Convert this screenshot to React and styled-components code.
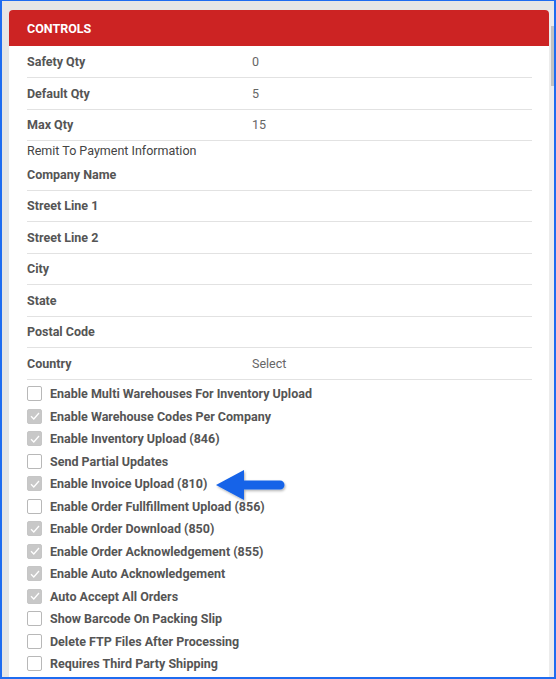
import styled, { createGlobalStyle } from "styled-components";

const GlobalStyle = createGlobalStyle`
  html, body {
    margin: 0;
    padding: 0;
    background: #e6e6e6;
  }
  body {
    font-family: Roboto, "Liberation Sans", Arial, sans-serif;
  }
`;

const Frame = styled.div`
  position: relative;
  box-sizing: border-box;
  width: 556px;
  height: 679px;
  border: 2px solid #1f6cf0;
  border-top-width: 1px;
  background: #e6e6e6;
  display: flex;
  overflow: hidden;
`;

const Panel = styled.div`
  margin: 9px 0 0 7px;
  width: 540px;
  background: #fff;
  border-radius: 4px 4px 0 0;
  overflow: hidden;
`;

const Header = styled.div`
  height: 36px;
  background: #cc2323;
  color: #fff;
  font-size: 12.5px;
  font-weight: 700;
  display: flex;
  align-items: center;
  padding: 1px 0 0 18px;
  box-sizing: border-box;
  text-transform: uppercase;
`;

const Body = styled.div`
  padding: 0 17px 0 18px;
`;

const Row = styled.div`
  height: ${(p) => (p.first ? "31px" : "30.5px")};
  border-bottom: 1px solid #e2e2e2;
  display: flex;
  align-items: center;
  font-size: 12.5px;
`;

const Label = styled.div`
  width: 225px;
  color: #555;
  font-weight: 700;
`;

const Value = styled.div`
  color: #666;
`;

const Section = styled.div`
  height: 18px;
  display: flex;
  align-items: center;
  font-size: 12.5px;
  color: #444;
`;

const Checks = styled.div`
  padding-top: 3px;
`;

const CheckItem = styled.div`
  height: 22.5px;
  display: flex;
  align-items: center;
  gap: 8px;
  font-size: 12.5px;
  font-weight: 700;
  color: #555;
`;

const Box = styled.span`
  box-sizing: border-box;
  width: 15px;
  height: 15px;
  border-radius: 2px;
  border: 1px solid ${(p) => (p.checked ? "#c6c6c6" : "#b8b8b8")};
  background: ${(p) => (p.checked ? "#c8c8c8" : "#fff")};
  display: flex;
  align-items: center;
  justify-content: center;
`;

const Scrollbar = styled.div`
  width: 5px;
  margin-top: 9px;
  background: #ececec;
  position: relative;
`;

const Thumb = styled.div`
  position: absolute;
  top: 16px;
  right: 0;
  width: 3px;
  height: 60px;
  background: #c2c2c2;
`;

const Arrow = styled.svg`
  position: absolute;
  left: 207px;
  top: 465px;
  overflow: visible;
`;

const fields = [
  ["Safety Qty", "0"],
  ["Default Qty", "5"],
  ["Max Qty", "15"],
];

const address = [
  ["Company Name", ""],
  ["Street Line 1", ""],
  ["Street Line 2", ""],
  ["City", ""],
  ["State", ""],
  ["Postal Code", ""],
  ["Country", "Select"],
];

const options = [
  ["Enable Multi Warehouses For Inventory Upload", false],
  ["Enable Warehouse Codes Per Company", true],
  ["Enable Inventory Upload (846)", true],
  ["Send Partial Updates", false],
  ["Enable Invoice Upload (810)", true],
  ["Enable Order Fullfillment Upload (856)", false],
  ["Enable Order Download (850)", true],
  ["Enable Order Acknowledgement (855)", true],
  ["Enable Auto Acknowledgement", true],
  ["Auto Accept All Orders", true],
  ["Show Barcode On Packing Slip", false],
  ["Delete FTP Files After Processing", false],
  ["Requires Third Party Shipping", false],
];

const Check = () => (
  <svg width="10" height="8" viewBox="0 0 10 8">
    <path d="M1 4.2 L3.8 7 L9 1" fill="none" stroke="#fff" strokeWidth="1.3" />
  </svg>
);

const App = () => {
  return (
    <>
      <GlobalStyle />
      <Frame>
        <Panel>
          <Header>Controls</Header>
          <Body>
            {fields.map(([l, v], i) => (
              <Row key={l} first={i === 0}>
                <Label>{l}</Label>
                <Value>{v}</Value>
              </Row>
            ))}
            <Section>Remit To Payment Information</Section>
            {address.map(([l, v]) => (
              <Row key={l}>
                <Label>{l}</Label>
                <Value>{v}</Value>
              </Row>
            ))}
            <Checks>
              {options.map(([l, c]) => (
                <CheckItem key={l}>
                  <Box checked={c}>{c && <Check />}</Box>
                  {l}
                </CheckItem>
              ))}
            </Checks>
          </Body>
        </Panel>
        <Scrollbar>
          <Thumb />
        </Scrollbar>
        <Arrow width="80" height="38" viewBox="0 0 80 38">
          <defs>
            <filter id="sh" x="-20%" y="-30%" width="140%" height="160%">
              <feDropShadow dx="1" dy="1.5" stdDeviation="1.2" floodColor="#000" floodOpacity="0.3" />
            </filter>
          </defs>
          <g filter="url(#sh)" fill="#1563e8">
            <path d="M7 19 L35 4 L35 14.5 L71 14.5 A4.5 4.5 0 0 1 71 23.5 L35 23.5 L35 34 Z" />
          </g>
        </Arrow>
      </Frame>
    </>
  );
};

export default App;
